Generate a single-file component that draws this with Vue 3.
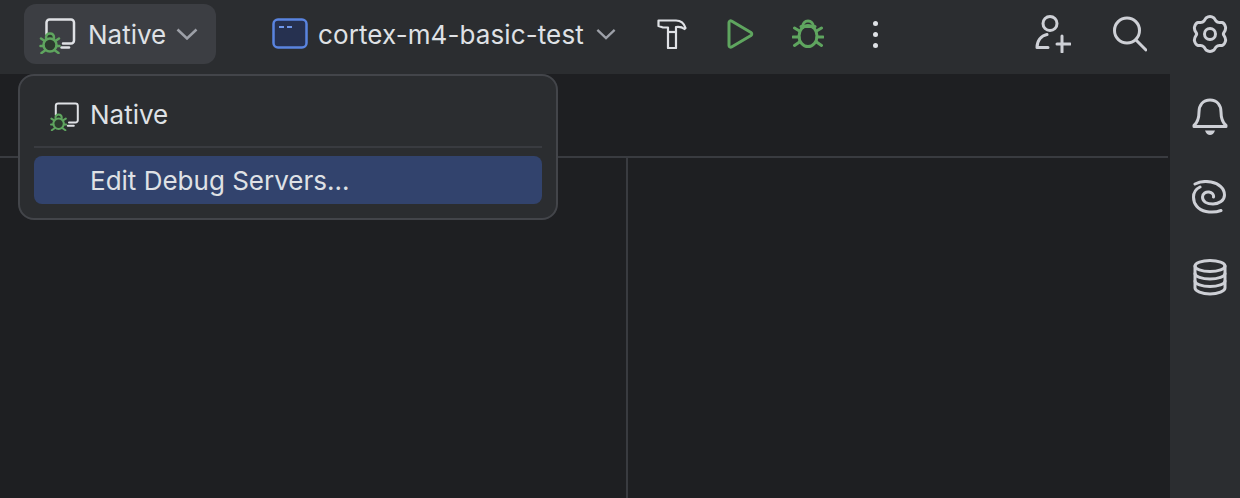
<template>
  <div class="ide">
    <header class="toolbar">
      <button class="widget debug-widget">
        <svg class="ic-native" width="40" height="40" viewBox="0 0 40 40">
          <path class="line mono" d="M8.500 20V8.500A3 3 0 0 1 11.500 5.500H33A3 3 0 0 1 36 8.500V26.500A3 3 0 0 1 33 29.500H25" />
          <path class="line mono" d="M23.500 33.500H31" />
          <g class="bug">
            <path class="bug-head" d="M8 24C8 21 9.800 19.500 12 19.500C14.200 19.500 16 21 16 24" />
            <circle class="bug-body" cx="12" cy="31" r="6.500" />
            <path d="M6 26.500L3 24.500M18 26.500L21 24.500M5.500 32H2.500M18.500 32H21.500M7 36.500L3.500 39M17 36.500L20.500 39" />
          </g>
        </svg>
        <span class="label">Native</span>
        <svg class="chevron" width="22" height="12" viewBox="0 0 22 12"><path d="M1.500 1.500L11 10.500L20.500 1.500" /></svg>
      </button>

      <div class="run-config">
        <svg width="36" height="32" viewBox="0 0 36 32">
          <rect x="1.500" y="1.500" width="33" height="28" rx="4.500" fill="#263150" stroke="#5a84e0" stroke-width="2.500" />
          <path d="M7 9H12M15 9H20" stroke="#6f97ea" stroke-width="2" fill="none" />
        </svg>
        <span class="label">cortex-m4-basic-test</span>
        <svg class="chevron small" width="20" height="12" viewBox="0 0 22 12"><path d="M1.500 1.500L11 10.500L20.500 1.500" /></svg>
      </div>

      <div class="actions">
        <svg class="icon" width="30" height="30" viewBox="0 0 30 30">
          <path class="hammer" d="M1.500 1.500H19C23 1.500 27 4 28.500 9L27.500 10C25 8 22.500 7.500 19 8V29H11V8.500H6L1.500 7Z" />
          <path class="hammer" d="M11 13H19" />
        </svg>
        <svg class="icon green" width="28" height="30" viewBox="0 0 28 30">
          <path class="line" d="M3 3.500C3 2 4.500 1.500 5.500 2L25 13.500C26 14.200 26 15.800 25 16.500L5.500 28C4.500 28.500 3 28 3 26.500Z" />
        </svg>
        <svg class="icon green" width="32" height="30" viewBox="0 0 32 30">
          <path class="line" d="M10.500 8.500C10.500 4.500 13 2 16 2C19 2 21.500 4.500 21.500 8.500" />
          <path class="line" d="M9 7.500H23" />
          <ellipse class="line" cx="16" cy="17" rx="9" ry="10.500" />
          <path class="line" d="M7.500 12L2.500 9M24.500 12L29.500 9M7 18H1M25 18H31M7.500 23L2.500 26.500M24.500 23L29.500 26.500" />
        </svg>
        <div class="dots"><i></i><i></i><i></i></div>
      </div>

      <div class="right-actions">
        <svg class="icon" width="36" height="38" viewBox="0 0 36 38">
          <circle class="line" cx="15" cy="8.500" r="7" />
          <path class="line" d="M2 32.500C2 26 6 20.500 12 19.500M2 32.500H13M27 21V37M22 29H35" />
        </svg>
        <svg class="icon search" width="34" height="36" viewBox="0 0 34 36">
          <circle class="line" cx="14" cy="14.500" r="12.500" />
          <path class="line" d="M23 24L33 34" />
        </svg>
        <svg class="icon" width="36" height="38" viewBox="0 0 36 38">
          <path class="line" d="M14 3C16.500 1.200 19.500 1.200 22 3L24 6C25 7.200 26 7.500 27.500 7.500H30C32.500 8 33 10 33.500 12C34 14 33 16 32 17.500C31 18.700 31 19.300 32 20.500C33 22 34 24 33.500 26C33 28 32.500 30 30 30.500H27.500C26 30.500 25 31 24 32L22 35C19.500 36.800 16.500 36.800 14 35L12 32C11 31 10 30.500 8.500 30.500H6C3.500 30 3 28 2.500 26C2 24 3 22 4 20.500C5 19.300 5 18.700 4 17.500C3 16 2 14 2.500 12C3 10 3.500 8 6 7.500H8.500C10 7.500 11 7.200 12 6Z" />
          <circle class="line" cx="18" cy="19" r="5.500" />
        </svg>
      </div>
    </header>

    <div class="body">
      <main class="editor">
        <div class="tabs"></div>
        <div class="panes">
          <div class="pane left"></div>
          <div class="pane"></div>
        </div>
      </main>
      <aside class="sidebar">
        <svg class="icon" width="36" height="38" viewBox="0 0 36 38">
          <path class="line" d="M2 27.500C6 24 7 20 7 14C7 7 11 2 18 2C25 2 29 7 29 14C29 20 30 24 34 27.500V28.500H2Z" />
          <path class="fill" d="M13 32.500H23C22 35.500 20 37 18 37C16 37 14 35.500 13 32.500Z" />
        </svg>
        <svg class="icon" width="36" height="34" viewBox="0 0 36 34">
          <path class="line" d="M3 4C8 1.500 14 1 19 2C27 3.500 32.500 8.500 32.500 15C32.500 20.500 27 24 21 24C15 24 10.500 21.500 10.500 17C10.500 13.500 14 11.500 17 12C20 12.500 22 14.500 21.500 17" />
          <path class="line" d="M29 30.500C25 32 19 32.500 14 31.500C6 30 1.500 24 1.500 17C1.500 12.500 4 9 8 7" />
        </svg>
        <svg class="icon" width="36" height="38" viewBox="0 0 36 38">
          <ellipse class="line" cx="18" cy="8" rx="15" ry="5.500" />
          <path class="line" d="M3 8V30C3 33 10 36 18 36C26 36 33 33 33 30V8" />
          <path class="line" d="M3 15.500C3 18.500 10 21 18 21C26 21 33 18.500 33 15.500M3 23C3 26 10 28.500 18 28.500C26 28.500 33 26 33 23" />
        </svg>
      </aside>
    </div>

    <div class="popup">
      <div class="popup-item first">
        <svg class="ic-native" width="32" height="32" viewBox="0 0 40 40">
          <path class="line mono" d="M8.500 20V8.500A3 3 0 0 1 11.500 5.500H33A3 3 0 0 1 36 8.500V26.500A3 3 0 0 1 33 29.500H25" />
          <path class="line mono" d="M23.500 33.500H31" />
          <g class="bug">
            <path class="bug-head" d="M8 24C8 21 9.800 19.500 12 19.500C14.200 19.500 16 21 16 24" />
            <circle class="bug-body" cx="12" cy="31" r="6.500" />
            <path d="M6 26.500L3 24.500M18 26.500L21 24.500M5.500 32H2.500M18.500 32H21.500M7 36.500L3.500 39M17 36.500L20.500 39" />
          </g>
        </svg>
        <span class="label">Native</span>
      </div>
      <div class="separator"></div>
      <div class="popup-item selected">
        <span class="label">Edit Debug Servers...</span>
      </div>
    </div>
  </div>
</template>

<script setup>
</script>

<style>
body {
  background: #1e1f22;
}
</style>

<style scoped>
.ide {
  position: relative;
  width: 1240px;
  height: 498px;
  overflow: hidden;
  background: #1e1f22;
  font-family: Inter, "Liberation Sans", sans-serif;
  color: #dfe1e5;
}

.label {
  margin-top: 2px;
  font-size: 26px;
  line-height: 32px;
  white-space: nowrap;
}

.toolbar {
  display: flex;
  align-items: center;
  height: 68px;
  padding: 0 0 6px 24px;
  background: #2b2d30;
}

.widget {
  display: flex;
  align-items: center;
  width: 192px;
  height: 60px;
  padding: 0 0 0 14px;
  box-sizing: border-box;
  border: none;
  border-radius: 12px;
  background: #3c3e43;
  color: inherit;
  font: inherit;
}

.widget .label {
  margin-left: 10px;
}

.chevron {
  margin-left: 10px;
  fill: none;
  stroke: #9da0a8;
  stroke-width: 2.500;
}

.chevron.small {
  margin-left: 12px;
}

.run-config {
  display: flex;
  align-items: center;
  margin-left: 56px;
}

.run-config .label {
  margin-left: 10px;
  letter-spacing: 0.1px;
}

.actions {
  display: grid;
  grid-template-columns: repeat(4, 68px);
  justify-items: center;
  align-items: center;
  margin-left: 22px;
}

.right-actions {
  display: flex;
  align-items: center;
  gap: 42px;
  margin-left: auto;
  padding-right: 12px;
}

.search {
  margin-right: 3px;
}

.line {
  fill: none;
  stroke: #ced0d6;
  stroke-width: 3;
  stroke-linecap: round;
  stroke-linejoin: round;
}

.line.mono {
  stroke: #dfe1e5;
  stroke-width: 2.500;
}

.hammer {
  fill: none;
  stroke: #dfe1e5;
  stroke-width: 2.200;
  stroke-linejoin: round;
}

.fill {
  fill: #ced0d6;
}

.green .line {
  stroke: #5fa55f;
}

.bug path {
  fill: none;
  stroke: #5fa55f;
  stroke-width: 2.500;
  stroke-linecap: round;
}

.bug .bug-head {
  fill: #2c3a2e;
}

.bug-body {
  fill: #2c3a2e;
  stroke: #5fa55f;
  stroke-width: 2.500;
}

.dots {
  display: flex;
  flex-direction: column;
  gap: 6px;
}

.dots i {
  display: block;
  width: 5px;
  height: 5px;
  border-radius: 50%;
  background: #dfe1e5;
}

.body {
  display: flex;
  height: 424px;
}

.editor {
  display: flex;
  flex: 1;
  flex-direction: column;
  min-width: 0;
  padding-right: 2px;
}

.tabs {
  height: 82px;
  border-bottom: 2px solid #393b40;
}

.panes {
  display: flex;
  flex: 1;
}

.pane {
  flex: 1;
}

.pane.left {
  flex: none;
  width: 626px;
  border-right: 2px solid #393b40;
}

.sidebar {
  display: flex;
  flex-direction: column;
  align-items: center;
  gap: 44px;
  width: 70px;
  padding: 24px 0 0 10px;
  box-sizing: border-box;
  background: #2b2d30;
}

.popup {
  position: absolute;
  left: 18px;
  top: 74px;
  width: 540px;
  height: 146px;
  padding: 15px 14px;
  box-sizing: border-box;
  border: 2px solid #43454a;
  border-radius: 16px;
  background: #2b2d30;
}

.popup-item {
  display: flex;
  align-items: center;
  height: 48px;
  border-radius: 8px;
  padding-left: 56px;
}

.popup-item.first .label {
  margin-top: 0;
}

.popup-item .ic-native {
  margin-left: -41px;
  margin-right: 9px;
}

.popup-item.selected {
  background: #32436d;
}

.separator {
  height: 2px;
  margin: 7px 0 8px;
  background: #393b40;
}
</style>
